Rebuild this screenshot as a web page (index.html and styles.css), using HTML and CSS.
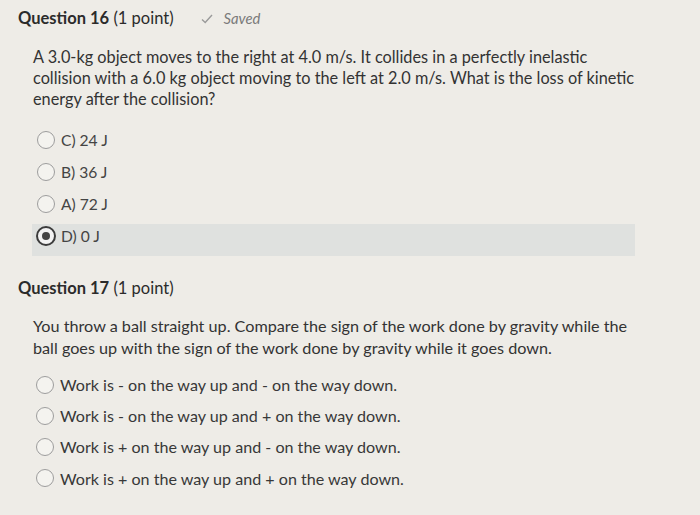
FILE: index.html
```html
<!DOCTYPE html>
<html>
<head>
<meta charset="utf-8">
<link rel="stylesheet" href="styles.css">
</head>
<body>
<div class="page">
  <section class="question q16">
    <div class="q-head">
      <span class="q-title"><b>Question 16</b> (1 point)</span>
      <span class="saved">
        <svg class="check" width="12" height="10" viewBox="0 0 12 10"><path d="M1 5.5 L4.2 8.5 L11 1" fill="none" stroke="#9a9a9a" stroke-width="1.4"/></svg>
        <i>Saved</i>
      </span>
    </div>
    <p class="q-text">A 3.0-kg object moves to the right at 4.0 m/s. It collides in a perfectly inelastic collision with a 6.0 kg object moving to the left at 2.0 m/s. What is the loss of kinetic energy after the collision?</p>
    <ul class="options">
      <li class="opt"><span class="radio"></span>C) 24 J</li>
      <li class="opt"><span class="radio"></span>B) 36 J</li>
      <li class="opt"><span class="radio"></span>A) 72 J</li>
      <li class="opt selected"><span class="radio checked"></span>D) 0 J</li>
    </ul>
  </section>
  <section class="question q17">
    <div class="q-head">
      <span class="q-title"><b>Question 17</b> (1 point)</span>
    </div>
    <p class="q-text">You throw a ball straight up. Compare the sign of the work done by gravity while the ball goes up with the sign of the work done by gravity while it goes down.</p>
    <ul class="options">
      <li class="opt"><span class="radio"></span>Work is - on the way up and - on the way down.</li>
      <li class="opt"><span class="radio"></span>Work is - on the way up and + on the way down.</li>
      <li class="opt"><span class="radio"></span>Work is + on the way up and - on the way down.</li>
      <li class="opt"><span class="radio"></span>Work is + on the way up and + on the way down.</li>
    </ul>
  </section>
</div>
</body>
</html>
```
FILE: styles.css
```css
html, body {
  margin: 0;
  padding: 0;
  background: #eeece7;
}
body {
  font-family: Lato, "Open Sans", sans-serif;
  color: #333;
  width: 700px;
  height: 515px;
  overflow: hidden;
}
.page {
  padding: 8px 0 0 18px;
}
.q-head {
  display: flex;
  align-items: baseline;
  font-size: 16.5px;
  color: #2b2b2b;
  height: 24px;
}
.q-title b {
  font-weight: 700;
}
.saved {
  margin-left: 27px;
  font-size: 14.8px;
  color: #7a7a7a;
  display: inline-flex;
  align-items: baseline;
  gap: 11px;
}
.q-text {
  margin: 14px 0 0 15px;
  width: 612px;
  font-size: 16.3px;
  line-height: 21px;
  color: #333;
}
.options {
  list-style: none;
  margin: 0;
  padding: 0;
}
.q16 .options {
  margin-top: 15px;
}
.opt {
  display: flex;
  align-items: center;
  height: 32px;
  font-size: 15.6px;
  color: #444;
  width: 603px;
  margin-left: 14px;
  box-sizing: border-box;
  padding-left: 5px;
}
.radio {
  width: 18px;
  height: 18px;
  border: 1px solid #9d9d9d;
  border-radius: 50%;
  box-sizing: border-box;
  margin-right: 6px;
  flex: none;
  background: #f4f3ef;
}
.selected {
  background: #dfe1df;
  margin-top: 4px;
  padding-bottom: 8px;
}
.radio.checked {
  border: 2px solid #3c3c3c;
  position: relative;
  width: 20px;
  height: 20px;
  margin-left: -1px;
  margin-right: 5px;
  background: #f3f3f3;
}
.radio.checked::after {
  content: "";
  position: absolute;
  left: 4px;
  top: 4px;
  width: 8px;
  height: 8px;
  border-radius: 50%;
  background: #444;
}
.q17 {
  margin-top: 22px;
}
.q17 .q-text {
  margin-top: 13px;
  font-size: 16.2px;
  line-height: 22px;
}
.q17 .options {
  margin-top: 10px;
}
.q17 .opt {
  height: 31.2px;
  font-size: 16.1px;
  color: #383838;
  margin-left: 14px;
  padding-left: 4px;
}
```
